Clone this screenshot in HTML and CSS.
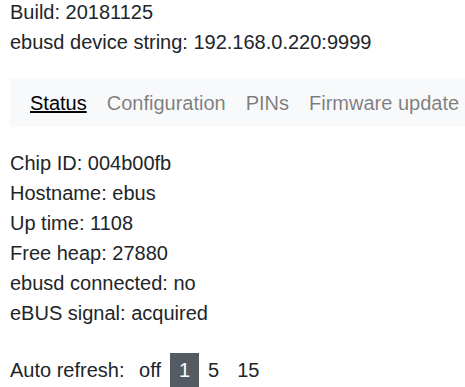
FILE: index.html
```html
<!DOCTYPE html>
<html>
<head>
<meta charset="utf-8">
<link rel="stylesheet" href="styles.css">
</head>
<body>
<div class="page">
  <div class="info">
    <div>Build: 20181125</div>
    <div>ebusd device string: 192.168.0.220:9999</div>
  </div>
  <nav class="nav">
    <a class="nav-link active">Status</a>
    <a class="nav-link">Configuration</a>
    <a class="nav-link">PINs</a>
    <a class="nav-link">Firmware update</a>
  </nav>
  <div class="status">
    <div>Chip ID: 004b00fb</div>
    <div>Hostname: ebus</div>
    <div>Up time: 1108</div>
    <div>Free heap: 27880</div>
    <div>ebusd connected: no</div>
    <div>eBUS signal: acquired</div>
  </div>
  <div class="refresh">Auto refresh: <a class="opt">off</a><a class="opt sel">1</a><a class="opt">5</a><a class="opt">15</a></div>
</div>
</body>
</html>
```
FILE: styles.css
```css
html, body {
  margin: 0;
  padding: 0;
  background: #fff;
}
body {
  font-family: "Liberation Sans", Arial, sans-serif;
  font-size: 20px;
  line-height: 30px;
  color: #212529;
  overflow: hidden;
}
.page {
  margin-top: -3px;
  padding-left: 10px;
}
.info {
  margin-bottom: 21px;
}
.nav {
  display: flex;
  background: #f8f9fa;
  padding: 10px 10px 9px 10px;
  white-space: nowrap;
  overflow: hidden;
}
.nav-link {
  flex: none;
  padding: 0 10px;
  color: rgba(0, 0, 0, 0.5);
}
.nav-link.active {
  color: #000;
  text-decoration: underline;
}
.status {
  margin-top: 21px;
  margin-bottom: 25px;
}
.refresh {
  white-space: nowrap;
}
.opt {
  display: inline-block;
  padding: 2px 9px;
  line-height: 30px;
  color: #212529;
}
.opt.sel {
  background: #545b62;
  color: #fff;
}
```
